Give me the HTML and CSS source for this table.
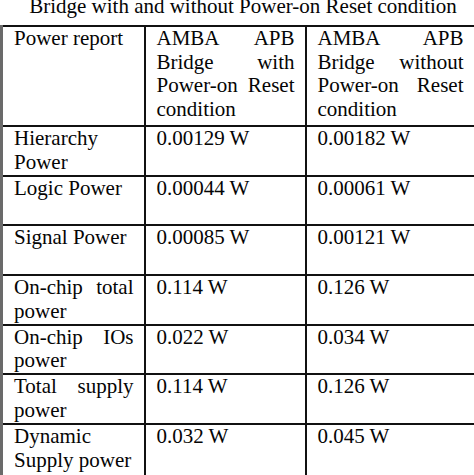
FILE: index.html
```html
<!DOCTYPE html>
<html>
<head>
<meta charset="utf-8">
<link rel="stylesheet" href="styles.css">
</head>
<body>
<div class="caption">Bridge with and without Power-on Reset condition</div>
<table class="power">
  <colgroup>
    <col class="c1"><col class="c2"><col class="c3">
  </colgroup>
  <tr class="head">
    <td>Power report</td>
    <td>AMBA APB Bridge with Power-on Reset condition</td>
    <td>AMBA APB Bridge without Power-on Reset condition</td>
  </tr>
  <tr><td>Hierarchy Power</td><td>0.00129 W</td><td>0.00182 W</td></tr>
  <tr><td>Logic Power</td><td>0.00044 W</td><td>0.00061 W</td></tr>
  <tr><td>Signal Power</td><td>0.00085 W</td><td>0.00121 W</td></tr>
  <tr><td>On-chip total power</td><td>0.114 W</td><td>0.126 W</td></tr>
  <tr><td>On-chip IOs power</td><td>0.022 W</td><td>0.034 W</td></tr>
  <tr><td>Total supply power</td><td>0.114 W</td><td>0.126 W</td></tr>
  <tr class="last"><td>Dynamic Supply power</td><td>0.032 W</td><td>0.045 W</td></tr>
</table>
</body>
</html>
```
FILE: styles.css
```css
html, body {
  margin: 0;
  padding: 0;
  background: #fff;
  overflow: hidden;
}
body {
  font-family: "Liberation Serif", "Times New Roman", serif;
  color: #050505;
  font-size: 21px;
}
.caption {
  text-align: center;
  line-height: 23px;
  margin-top: -5px;
  padding-left: 12px;
  height: 30px;
  white-space: nowrap;
}
.power {
  border-collapse: collapse;
  table-layout: fixed;
  width: 473px;
  border-left: 3px solid #6a6a6a;
}
.c1 { width: 143px; }
.c2 { width: 161px; }
.c3 { width: 169px; }
.power td {
  border: 2px solid #111;
  padding: 0 10px 0 11px;
  vertical-align: top;
  text-align: justify;
  text-align-last: left;
  line-height: 23.5px;
  height: 49.7px;
  box-sizing: border-box;
}
.power td:first-child {
  border-left: 3px solid #6a6a6a;
}
.power .head td {
  height: 100px;
}
.power .last td {
  height: 70px;
}
```
